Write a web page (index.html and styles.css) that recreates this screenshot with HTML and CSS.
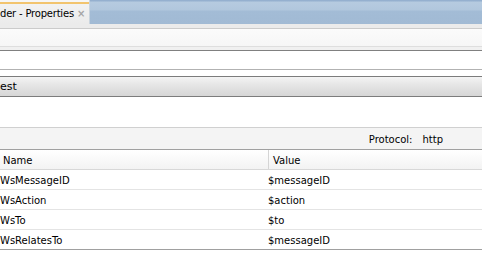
FILE: index.html
```html
<!DOCTYPE html>
<html lang="en">
<head>
    <meta charset="UTF-8">
    <title>Builder - Properties</title>
    <link rel="stylesheet" href="styles.css">
</head>
<body>
    <div class="tabbar">
        <div class="tab">
            <span class="tab-title">der - Properties</span>
            <span class="tab-close">&#215;</span>
        </div>
        <div class="tab-fill"></div>
    </div>

    <div class="toolbar"></div>
    <div class="field"></div>
    <div class="strip"></div>
    <div class="blank"></div>
    <div class="gap"></div>

    <div class="section-head">est</div>
    <div class="section-body"></div>

    <div class="protocol-bar">
        <span class="protocol-label">Protocol:</span>
        <span class="protocol-value">http</span>
    </div>

    <div class="grid">
        <div class="grid-head">
            <div class="cell name">Name</div>
            <div class="cell value">Value</div>
        </div>
        <div class="grid-row">
            <div class="cell name">WsMessageID</div>
            <div class="cell value">$messageID</div>
        </div>
        <div class="grid-row">
            <div class="cell name">WsAction</div>
            <div class="cell value">$action</div>
        </div>
        <div class="grid-row">
            <div class="cell name">WsTo</div>
            <div class="cell value">$to</div>
        </div>
        <div class="grid-row last">
            <div class="cell name">WsRelatesTo</div>
            <div class="cell value">$messageID</div>
        </div>
    </div>
</body>
</html>
```

FILE: styles.css
```css
body {
    margin: 0;
    padding: 0;
    background-color: #fff;
    font-family: "DejaVu Sans", Verdana, sans-serif;
    font-size: 10px;
    color: #000;
    overflow: hidden;
}

.tabbar {
    display: flex;
    height: 24px;
}

.tab {
    width: 90px;
    display: flex;
    align-items: center;
    gap: 3px;
    background: linear-gradient(#f6f6f6 0, #f6f6f6 2px, #f2c46e 2px, #f2c46e 4px, #f2f2f2 4px, #ebebeb 100%);
    border-right: 1px solid #c9d4de;
    padding-top: 2px;
    box-sizing: border-box;
}

.tab-title {
    font-size: 10px;
    letter-spacing: -0.2px;
    white-space: nowrap;
}

.tab-close {
    color: #a6a6a6;
    font-size: 10px;
    font-weight: bold;
}

.tab-fill {
    flex: 1;
    background: linear-gradient(#95b0cf 0, #95b0cf 1px, #b6cbe0 2px, #b1c7dd 10px, #a3bcd6 11px, #a1bad4 100%);
}

.toolbar {
    height: 4px;
    background-color: #ebebeb;
    border-bottom: 1px solid #cbcbcb;
}

.field {
    height: 17px;
    background: linear-gradient(#fbfbfb, #f6f6f6);
    border-bottom: 1px solid #dedede;
}

.strip {
    height: 3px;
    background-color: #f0f0f0;
    border-bottom: 1px solid #808080;
}

.blank {
    height: 18px;
    border-bottom: 1px solid #b2b2b2;
}

.gap {
    height: 6px;
}

.section-head {
    height: 19px;
    line-height: 19px;
    border-top: 1px solid #7c7c7c;
    border-bottom: 1px solid #7c7c7c;
    background: linear-gradient(#f4f4f4, #e6e6e6 40%, #d6d6d6);
    font-size: 11px;
}

.section-body {
    height: 30px;
    border-bottom: 1px solid #d0d0d0;
}

.protocol-bar {
    height: 22px;
    display: flex;
    align-items: center;
    justify-content: flex-end;
    gap: 10px;
    padding-top: 1px;
    padding-right: 39px;
    box-sizing: border-box;
    background-color: #f4f4f4;
    border-bottom: 1px solid #a0a0a0;
}

.grid-head,
.grid-row {
    display: grid;
    grid-template-columns: 268px 1fr;
    height: 19px;
    border-bottom: 1px solid #e4e4e4;
}

.grid-head {
    background: linear-gradient(#ffffff, #f3f3f3);
    border-bottom-color: #d8d8d8;
}

.grid-row.last {
    border-bottom-color: #a0a0a0;
}

.cell {
    display: flex;
    align-items: center;
    padding-top: 1px;
    white-space: nowrap;
}

.grid-head .name {
    padding-left: 3px;
}

.grid-head .value {
    padding-left: 4px;
    border-left: 1px solid #d5d5d5;
}
```
